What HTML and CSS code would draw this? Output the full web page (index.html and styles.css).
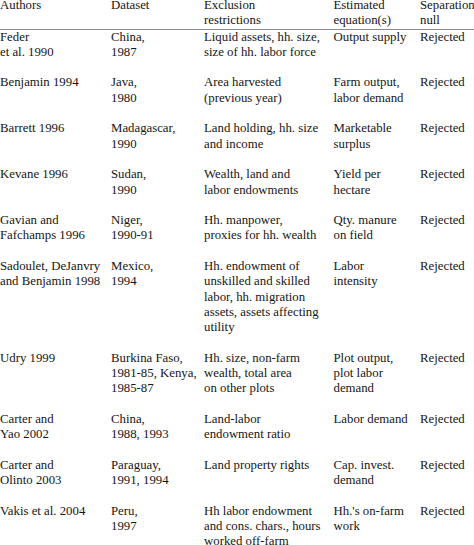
FILE: index.html
```html
<!DOCTYPE html>
<html>
<head>
<meta charset="utf-8">
<link rel="stylesheet" href="styles.css">
</head>
<body>
<div class="table">
  <div class="row head">
    <div>Authors</div>
    <div>Dataset</div>
    <div>Exclusion<br>restrictions</div>
    <div>Estimated<br>equation(s)</div>
    <div>Separation<br>null</div>
  </div>
  <div class="row">
    <div>Feder<br>et al. 1990</div>
    <div>China,<br>1987</div>
    <div>Liquid assets, hh. size,<br>size of hh. labor force</div>
    <div>Output supply</div>
    <div>Rejected</div>
  </div>
  <div class="row">
    <div>Benjamin 1994</div>
    <div>Java,<br>1980</div>
    <div>Area harvested<br>(previous year)</div>
    <div>Farm output,<br>labor demand</div>
    <div>Rejected</div>
  </div>
  <div class="row">
    <div>Barrett 1996</div>
    <div>Madagascar,<br>1990</div>
    <div>Land holding, hh. size<br>and income</div>
    <div>Marketable<br>surplus</div>
    <div>Rejected</div>
  </div>
  <div class="row">
    <div>Kevane 1996</div>
    <div>Sudan,<br>1990</div>
    <div>Wealth, land and<br>labor endowments</div>
    <div>Yield per<br>hectare</div>
    <div>Rejected</div>
  </div>
  <div class="row">
    <div>Gavian and<br>Fafchamps 1996</div>
    <div>Niger,<br>1990-91</div>
    <div>Hh. manpower,<br>proxies for hh. wealth</div>
    <div>Qty. manure<br>on field</div>
    <div>Rejected</div>
  </div>
  <div class="row">
    <div>Sadoulet, DeJanvry<br>and Benjamin 1998</div>
    <div>Mexico,<br>1994</div>
    <div>Hh. endowment of<br>unskilled and skilled<br>labor, hh. migration<br>assets, assets affecting<br>utility</div>
    <div>Labor<br>intensity</div>
    <div>Rejected</div>
  </div>
  <div class="row">
    <div>Udry 1999</div>
    <div>Burkina Faso,<br>1981-85, Kenya,<br>1985-87</div>
    <div>Hh. size, non-farm<br>wealth, total area<br>on other plots</div>
    <div>Plot output,<br>plot labor<br>demand</div>
    <div>Rejected</div>
  </div>
  <div class="row">
    <div>Carter and<br>Yao 2002</div>
    <div>China,<br>1988, 1993</div>
    <div>Land-labor<br>endowment ratio</div>
    <div>Labor demand</div>
    <div>Rejected</div>
  </div>
  <div class="row">
    <div>Carter and<br>Olinto 2003</div>
    <div>Paraguay,<br>1991, 1994</div>
    <div>Land property rights</div>
    <div>Cap. invest.<br>demand</div>
    <div>Rejected</div>
  </div>
  <div class="row">
    <div>Vakis et al. 2004</div>
    <div>Peru,<br>1997</div>
    <div>Hh labor endowment<br>and cons. chars., hours<br>worked off-farm</div>
    <div>Hh.'s on-farm<br>work</div>
    <div>Rejected</div>
  </div>
</div>
</body>
</html>
```
FILE: styles.css
```css
html, body {
  margin: 0;
  padding: 0;
  background: #ffffff;
  overflow: hidden;
}
body {
  width: 474px;
  height: 545px;
  font-family: "Liberation Serif", "Times New Roman", serif;
  font-size: 12.8px;
  line-height: 15.3px;
  color: #161616;
}
.table {
  margin-top: -2.5px;
  width: 474px;
}
.row {
  display: grid;
  grid-template-columns: 111px 93px 129.5px 86.5px 60px;
  padding-bottom: 15.3px;
  white-space: nowrap;
}
.row.head {
  border-bottom: 1px solid #8a8a8a;
  padding-bottom: 0.5px;
}
```
